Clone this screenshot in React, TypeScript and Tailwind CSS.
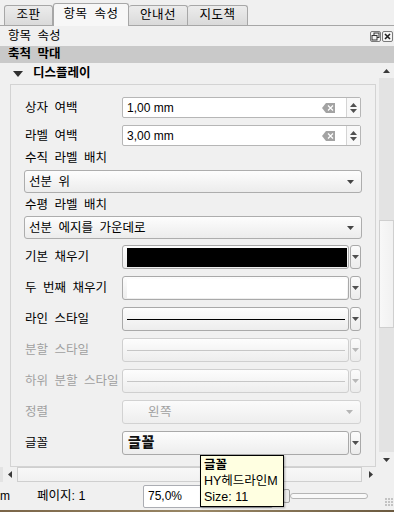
import React from "react";

const FONT = "font-['Liberation_Sans','Noto_Sans_CJK_KR',sans-serif]";

function Down({ color = "#404040" }: { color?: string }) {
  return (
    <svg width="7" height="4" viewBox="0 0 7 4">
      <path d="M0 0h7L3.5 4z" fill={color} />
    </svg>
  );
}
function Up({ color = "#404040" }: { color?: string }) {
  return (
    <svg width="7" height="4" viewBox="0 0 7 4">
      <path d="M0 4h7L3.5 0z" fill={color} />
    </svg>
  );
}

function ClearIcon() {
  return (
    <svg width="13" height="10" viewBox="0 0 13 10" className="mr-[11px] shrink-0">
      <path d="M4 0h9v10H4L0 5z" fill="#a3a3a3" />
      <path d="M6 2.5l5 5M11 2.5l-5 5" stroke="#fff" strokeWidth="1.2" />
    </svg>
  );
}

function Label({ children, disabled = false }: { children: React.ReactNode; disabled?: boolean }) {
  return (
    <div
      className={`w-[97px] shrink-0 text-[12.5px] leading-[16px] [word-spacing:3px] ${
        disabled ? "text-[#a0a0a0]" : "text-black"
      }`}
    >
      {children}
    </div>
  );
}

function SpinInput({ value }: { value: string }) {
  return (
    <div className="flex h-[21px] w-[239px] rounded-[2px] border border-[#b6b6b6] bg-white">
      <div className="flex flex-1 items-center pl-[4px] text-[12px] text-black">{value}</div>
      <div className="flex items-center">
        <ClearIcon />
      </div>
      <div className="flex w-[14px] flex-col items-center justify-center gap-[2px] border-l border-[#d4d4d4] bg-[#f8f8f8]">
        <Up color="#505050" />
        <Down color="#505050" />
      </div>
    </div>
  );
}

function Combo({ text }: { text: string }) {
  return (
    <div className="-ml-px flex h-[23px] w-[338px] items-center justify-between rounded-[3px] border border-[#adadad] bg-gradient-to-b from-[#fdfdfd] to-[#ececec] pl-[4px] pr-[7px]">
      <span className="text-[12.5px] leading-[16px] [word-spacing:3px] text-black">{text}</span>
      <Down color="#454545" />
    </div>
  );
}

function ArrowBtn({ disabled = false }: { disabled?: boolean }) {
  return (
    <div
      className={`flex h-full w-[11px] items-center justify-center rounded-[3px] border bg-gradient-to-b from-[#fbfbfb] to-[#ececec] ${
        disabled ? "border-[#cfcfcf]" : "border-[#a9a9a9]"
      }`}
    >
      <Down color={disabled ? "#b8b8b8" : "#505050"} />
    </div>
  );
}

function BtnRow({
  label,
  disabled = false,
  children,
  noArrow = false,
}: {
  label: string;
  disabled?: boolean;
  children: React.ReactNode;
  noArrow?: boolean;
}) {
  return (
    <div className="mt-[7px] flex h-[24px] items-center first:mt-0">
      <Label disabled={disabled}>{label}</Label>
      <div className="flex h-full gap-[1px]">
        {children}
        {!noArrow && <ArrowBtn disabled={disabled} />}
      </div>
    </div>
  );
}

function BtnFrame({ disabled = false, children, className = "" }: { disabled?: boolean; children?: React.ReactNode; className?: string }) {
  return (
    <div
      className={`flex h-full w-[227px] rounded-[3px] border bg-gradient-to-b from-[#fdfdfd] to-[#ededed] ${
        disabled ? "border-[#cfcfcf]" : "border-[#a9a9a9]"
      } ${className}`}
    >
      {children}
    </div>
  );
}

export default function App() {
  return (
    <div className={`relative flex h-[512px] w-[394px] flex-col overflow-hidden bg-[#f0f0f0] ${FONT}`}>
      {/* Tab bar */}
      <div className="flex h-[26px] shrink-0 items-end border-b border-[#a7a7a7] pl-[4px]">
        <div className="flex h-[20px] w-[49px] items-center justify-center rounded-t-[3px] border border-b-0 border-[#a7a7a7] bg-gradient-to-b from-[#ececec] to-[#dadada] text-[12.5px] tracking-[0.5px] text-black">
          조판
        </div>
        <div className="relative z-10 -mb-px flex h-[23px] w-[76px] items-center justify-center rounded-t-[3px] border border-b-0 border-[#a7a7a7] bg-[#f7f7f7] pb-[2px] text-[12.5px] tracking-[0.5px] [word-spacing:3px] text-black">
          항목 속성
        </div>
        <div className="flex h-[20px] w-[59px] items-center justify-center rounded-t-[3px] border border-b-0 border-l-0 border-[#a7a7a7] bg-gradient-to-b from-[#ececec] to-[#dadada] text-[12.5px] tracking-[0.5px] text-black">
          안내선
        </div>
        <div className="flex h-[20px] w-[60px] items-center justify-center rounded-t-[3px] border border-b-0 border-l-0 border-[#a7a7a7] bg-gradient-to-b from-[#ececec] to-[#dadada] text-[12.5px] tracking-[0.5px] text-black">
          지도책
        </div>
      </div>

      {/* Panel header */}
      <div className="flex h-[20px] shrink-0 items-center justify-between pl-[8px] pr-[1px]">
        <span className="text-[12.5px] [word-spacing:3px] text-black">항목 속성</span>
        <div className="flex gap-[1px]">
          <svg width="11" height="11" viewBox="0 0 11 11">
            <rect x="0.5" y="0.5" width="10" height="10" rx="1.5" fill="#f4f4f4" stroke="#7a7a7a" />
            <rect x="4" y="2" width="5" height="4.5" fill="none" stroke="#333" />
            <rect x="2" y="4.5" width="5" height="4.5" fill="#f4f4f4" stroke="#333" />
          </svg>
          <svg width="11" height="11" viewBox="0 0 11 11">
            <rect x="0.5" y="0.5" width="10" height="10" rx="1.5" fill="#f4f4f4" stroke="#7a7a7a" />
            <path d="M3 3l5 5M8 3l-5 5" stroke="#222" strokeWidth="1.6" />
          </svg>
        </div>
      </div>

      {/* Section bar */}
      <div className="flex h-[17px] shrink-0 items-center bg-[#c9c9c9] pl-[8px] text-[12.5px] font-bold [word-spacing:3px] text-black">
        축척 막대
      </div>

      {/* Scroll area */}
      <div className="flex h-[419px] shrink-0 flex-col">
        <div className="flex h-[404px]">
          <div className="flex w-[379px] flex-col overflow-hidden">
            <div className="flex h-[21px] shrink-0 items-center pl-[13px]">
              <svg width="10" height="6" viewBox="0 0 10 6" className="mr-[10px]">
                <path d="M0 0h10L5 6z" fill="#303030" />
              </svg>
              <span className="text-[12.5px] font-bold text-black">디스플레이</span>
            </div>
            <div className="ml-[10px] flex w-[366px] flex-1 flex-col border border-[#d3d3d3] px-[14px] pt-[12px]">
              <div className="flex h-[21px] items-center">
                <Label>상자 여백</Label>
                <SpinInput value="1,00 mm" />
              </div>
              <div className="mt-[7px] flex h-[21px] items-center">
                <Label>라벨 여백</Label>
                <SpinInput value="3,00 mm" />
              </div>
              <div className="flex h-[24px] items-center">
                <Label>수직 라벨 배치</Label>
              </div>
              <Combo text="선분 위" />
              <div className="flex h-[23px] items-center">
                <Label>수평 라벨 배치</Label>
              </div>
              <Combo text="선분 에지를 가운데로" />
              <div className="mt-[6px] flex flex-col">
                <BtnRow label="기본 채우기">
                  <BtnFrame className="pb-[1px] pl-[4px] pr-[1px] pt-[2px]">
                    <div className="flex-1 bg-black" />
                  </BtnFrame>
                </BtnRow>
                <BtnRow label="두 번째 채우기">
                  <BtnFrame className="pb-[1px] pl-[4px] pr-[1px] pt-[2px]">
                    <div className="flex-1 bg-white" />
                  </BtnFrame>
                </BtnRow>
                <BtnRow label="라인 스타일">
                  <BtnFrame className="items-center pl-[4px] pr-[3px]">
                    <div className="h-px flex-1 bg-black" />
                  </BtnFrame>
                </BtnRow>
                <BtnRow label="분할 스타일" disabled>
                  <BtnFrame disabled className="items-center pl-[4px] pr-[3px]">
                    <div className="h-px flex-1 bg-[#c6c6c6]" />
                  </BtnFrame>
                </BtnRow>
                <BtnRow label="하위 분할 스타일" disabled>
                  <BtnFrame disabled className="items-center pl-[4px] pr-[3px]">
                    <div className="h-px flex-1 bg-[#c6c6c6]" />
                  </BtnFrame>
                </BtnRow>
                <BtnRow label="정렬" disabled noArrow>
                  <div className="flex h-full w-[239px] items-center justify-between rounded-[3px] border border-[#d2d2d2] bg-gradient-to-b from-[#fbfbfb] to-[#eeeeee] pl-[25px] pr-[7px]">
                    <span className="text-[12.5px] tracking-[0.5px] text-[#a0a0a0]">왼쪽</span>
                    <Down color="#b5b5b5" />
                  </div>
                </BtnRow>
                <BtnRow label="글꼴">
                  <BtnFrame className="items-start pl-[5px] pt-[1px]">
                    <span className="text-[14px] font-black leading-[18px] tracking-[0.5px] text-[#111]">글꼴</span>
                  </BtnFrame>
                </BtnRow>
              </div>
            </div>
          </div>
          {/* vertical scrollbar */}
          <div className="flex w-[15px] flex-col bg-[#e3e3e3]">
            <div className="flex h-[15px] items-center justify-center bg-[#f0f0f0]">
              <Up color="#3a3a3a" />
            </div>
            <div className="h-[142px]" />
            <div className="h-[108px] border border-[#cfcfcf] bg-gradient-to-r from-[#f8f8f8] to-[#f1f1f1]" />
            <div className="flex-1" />
            <div className="flex h-[15px] items-center justify-center bg-[#f0f0f0]">
              <Down color="#3a3a3a" />
            </div>
          </div>
        </div>
        {/* horizontal scrollbar */}
        <div className="flex h-[15px]">
          <div className="flex w-[379px] bg-[#e3e3e3] pl-[3px]">
            <div className="flex w-[14px] items-center justify-center bg-[#f0f0f0]">
              <svg width="4" height="7" viewBox="0 0 4 7">
                <path d="M4 0v7L0 3.5z" fill="#3a3a3a" />
              </svg>
            </div>
            <div className="w-[345px] border border-[#cfcfcf] bg-gradient-to-b from-[#f8f8f8] to-[#f1f1f1]" />
            <div className="flex flex-1 items-center justify-center bg-[#f0f0f0]">
              <svg width="4" height="7" viewBox="0 0 4 7">
                <path d="M0 0v7L4 3.5z" fill="#3a3a3a" />
              </svg>
            </div>
          </div>
          <div className="flex-1 bg-[#f0f0f0]" />
        </div>
      </div>

      {/* Status bar */}
      <div className="flex h-[28px] shrink-0 items-center">
        <span className="w-[37px] text-[12px] text-black">m</span>
        <span className="w-[106px] text-[12.5px] text-black">페이지: 1</span>
        <div className="flex h-[23px] w-[130px] items-center rounded-[2px] border border-[#abadb3] bg-white pl-[4px] text-[12px] text-black">
          75,0%
        </div>
        <div className="ml-[10px] flex items-center">
          <div className="h-[14px] w-[7px] rounded-[2px] border border-[#a0a0a0] bg-[#ececec]" />
          <div className="h-[6px] w-[78px] rounded-[3px] border border-[#b5b5b5] bg-[#f9f9f9]" />
        </div>
        <div className="ml-auto mr-[1px] mt-[12px] grid grid-cols-3 gap-[1px]">
          {Array.from({ length: 9 }).map((_, i) => (
            <div key={i} className="h-[2px] w-[2px] bg-[#c3c3c3]" />
          ))}
        </div>
      </div>
      <div className="h-[2px] shrink-0 bg-gradient-to-r from-[#7a6548] via-[#9a8866] to-[#6b5a40]" />

      {/* Tooltip */}
      <div className="absolute left-[200px] top-[455px] flex h-[52px] w-[84px] flex-col justify-center border border-black bg-[#ffffe1] pl-[3px] text-[12.5px] leading-[16px] text-black shadow-[1px_1px_2px_rgba(0,0,0,0.3)]">
        <span className="font-bold">글꼴</span>
        <span>HY헤드라인M</span>
        <span>Size: 11</span>
      </div>
    </div>
  );
}
